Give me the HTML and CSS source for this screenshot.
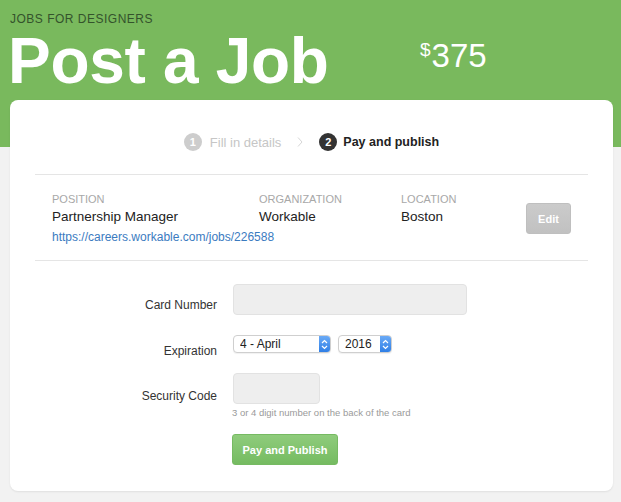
FILE: index.html
```html
<!DOCTYPE html>
<html lang="en">
<head>
<meta charset="utf-8">
<title>Post a Job</title>
<link rel="stylesheet" href="styles.css">
</head>
<body>
<header class="hero">
  <div class="kicker">JOBS FOR DESIGNERS</div>
  <div class="hero-row">
    <h1 class="title">Post a Job</h1>
    <div class="price"><span class="cur">$</span><span class="amt">375</span></div>
  </div>
</header>
<main class="card">
  <div class="steps">
    <div class="step done"><span class="num">1</span><span class="step-label">Fill in details</span></div>
    <svg class="chev" width="6" height="10" viewBox="0 0 6 10"><polyline points="1,0.5 5,5 1,9.5" fill="none" stroke="#d6d6d6" stroke-width="1"/></svg>
    <div class="step active"><span class="num">2</span><span class="step-label">Pay and publish</span></div>
  </div>
  <hr class="divider">
  <section class="summary">
    <div class="col">
      <div class="meta">POSITION</div>
      <div class="val">Partnership Manager</div>
      <a class="link" href="#">https://careers.workable.com/jobs/226588</a>
    </div>
    <div class="col">
      <div class="meta">ORGANIZATION</div>
      <div class="val">Workable</div>
    </div>
    <div class="col">
      <div class="meta">LOCATION</div>
      <div class="val">Boston</div>
    </div>
    <button class="btn-edit" type="button">Edit</button>
  </section>
  <hr class="divider">
  <form class="pay-form">
    <div class="form-row row-card">
      <label class="flabel">Card Number</label>
      <input class="field field-card" type="text">
    </div>
    <div class="form-row row-exp">
      <label class="flabel">Expiration</label>
      <div class="selects">
        <div class="sel sel-month">
          <select class="sel-input"><option>4 - April</option></select>
          <span class="sel-arrow"><svg width="7" height="11" viewBox="0 0 7 11"><polyline points="1,4 3.5,1.5 6,4" fill="none" stroke="#fff" stroke-width="1.2"/><polyline points="1,7 3.5,9.5 6,7" fill="none" stroke="#fff" stroke-width="1.2"/></svg></span>
        </div>
        <div class="sel sel-year">
          <select class="sel-input"><option>2016</option></select>
          <span class="sel-arrow"><svg width="7" height="11" viewBox="0 0 7 11"><polyline points="1,4 3.5,1.5 6,4" fill="none" stroke="#fff" stroke-width="1.2"/><polyline points="1,7 3.5,9.5 6,7" fill="none" stroke="#fff" stroke-width="1.2"/></svg></span>
        </div>
      </div>
    </div>
    <div class="form-row row-sec">
      <label class="flabel">Security Code</label>
      <div class="sec-col">
        <input class="field field-sec" type="text">
        <div class="help">3 or 4 digit number on the back of the card</div>
      </div>
    </div>
    <div class="form-row row-submit">
      <button class="btn-pay" type="button">Pay and Publish</button>
    </div>
  </form>
</main>
</body>
</html>
```

FILE: styles.css
```css
html, body {
  margin: 0;
  padding: 0;
}
body {
  font-family: "Liberation Sans", Arial, sans-serif;
  background: linear-gradient(to bottom, #79b95d 0, #79b95d 147px, #f2f2f2 147px, #f2f2f2 100%);
  min-height: 502px;
  color: #222;
}
.hero {
  padding: 13px 0 0 10px;
}
.kicker {
  font-size: 12px;
  line-height: 12px;
  letter-spacing: 0.5px;
  color: #34532c;
}
.hero-row {
  display: flex;
  align-items: flex-start;
  margin-top: 5px;
}
.title {
  margin: 0 0 0 -2px;
  width: 412px;
  font-size: 64px;
  line-height: 63px;
  font-weight: 700;
  letter-spacing: -0.3px;
  color: #fff;
}
.price {
  display: flex;
  align-items: flex-start;
  margin-top: 9px;
  color: #fff;
}
.cur {
  font-size: 19px;
  line-height: 19px;
  margin-top: 1px;
}
.amt {
  font-size: 33px;
  line-height: 33px;
  margin-left: 1px;
}
.card {
  display: block;
  margin: 7px 8px 0 10px;
  padding: 0 25px 26px;
  background: #fff;
  border-radius: 8px;
  box-shadow: 0 1px 2px rgba(0, 0, 0, 0.08);
}
.steps {
  display: flex;
  justify-content: center;
  align-items: center;
  padding-top: 33px;
  height: 18px;
  margin-bottom: 23px;
}
.step {
  display: flex;
  align-items: center;
}
.num {
  width: 18px;
  height: 18px;
  border-radius: 50%;
  display: flex;
  align-items: center;
  justify-content: center;
  color: #fff;
  font-size: 11px;
  font-weight: 700;
}
.done .num {
  background: #cdcdcd;
}
.done .step-label {
  margin-left: 8px;
  font-size: 13px;
  color: #c6c6c6;
}
.active .num {
  background: #333;
}
.active .step-label {
  margin-left: 6px;
  font-size: 12.5px;
  font-weight: 700;
  color: #222;
}
.chev {
  margin: 0 16px;
}
.divider {
  margin: 0;
  border: 0;
  border-top: 1px solid #e5e5e5;
  height: 0;
}
.summary {
  display: grid;
  grid-template-columns: 207px 142px 1fr 45px;
  padding: 18px 17px 16px;
}
.meta {
  font-size: 11px;
  line-height: 13px;
  color: #a8a8a8;
}
.val {
  margin-top: 3px;
  font-size: 13.5px;
  line-height: 16px;
  color: #222;
}
.link {
  display: block;
  margin-top: 5px;
  font-size: 12px;
  line-height: 14px;
  color: #3b7bbf;
  text-decoration: none;
}
.btn-edit {
  align-self: center;
  width: 45px;
  height: 31px;
  padding: 0;
  border: 1px solid #bfbfbf;
  border-radius: 3px;
  background: linear-gradient(#cbcbcb, #c1c1c1);
  color: #fff;
  font-family: inherit;
  font-size: 11px;
  font-weight: 700;
}
.pay-form {
  padding-top: 23px;
}
.form-row {
  display: flex;
  align-items: flex-start;
}
.flabel {
  width: 182px;
  margin-right: 16px;
  text-align: right;
  font-size: 12px;
  line-height: 15px;
  color: #333;
}
.row-card .flabel {
  padding-top: 14px;
}
.row-exp {
  margin-top: 20px;
}
.row-exp .flabel {
  padding-top: 9px;
}
.row-sec {
  margin-top: 14px;
}
.row-sec .flabel {
  padding-top: 16px;
}
.row-submit {
  margin-top: 15px;
  padding-left: 197px;
}
.field {
  box-sizing: border-box;
  height: 31px;
  margin: 0;
  border: 1px solid #e2e2e2;
  border-radius: 4px;
  background: #eeeeee;
  padding: 0 8px;
  font-family: inherit;
}
.field-card {
  width: 234px;
}
.field-sec {
  width: 87px;
  display: block;
}
.help {
  margin-top: 3px;
  margin-left: -1px;
  font-size: 9.5px;
  line-height: 12px;
  color: #9a9a9a;
}
.selects {
  display: flex;
  gap: 7px;
}
.sel {
  box-sizing: border-box;
  display: flex;
  height: 18px;
  border: 1px solid #cfcfcf;
  border-radius: 4px;
  background: #fff;
  box-shadow: 0 1px 1px rgba(0, 0, 0, 0.06);
  overflow: hidden;
}
.sel-month {
  width: 98px;
}
.sel-year {
  width: 54px;
}
.sel-input {
  flex: 1;
  min-width: 0;
  -webkit-appearance: none;
  appearance: none;
  border: 0;
  outline: 0;
  background: transparent;
  margin: 0;
  padding: 0 0 0 6px;
  height: 16px;
  font-family: inherit;
  font-size: 12px;
  color: #222;
}
.sel-arrow {
  width: 11px;
  display: flex;
  align-items: center;
  justify-content: center;
  background: linear-gradient(#6aaaf6, #2f7fe6);
}
.btn-pay {
  width: 106px;
  height: 31px;
  padding: 0;
  border: 1px solid #76ba62;
  border-radius: 3px;
  background: linear-gradient(#8fcc7c, #75bb61);
  color: #fff;
  font-family: inherit;
  font-size: 11px;
  font-weight: 700;
}
```
